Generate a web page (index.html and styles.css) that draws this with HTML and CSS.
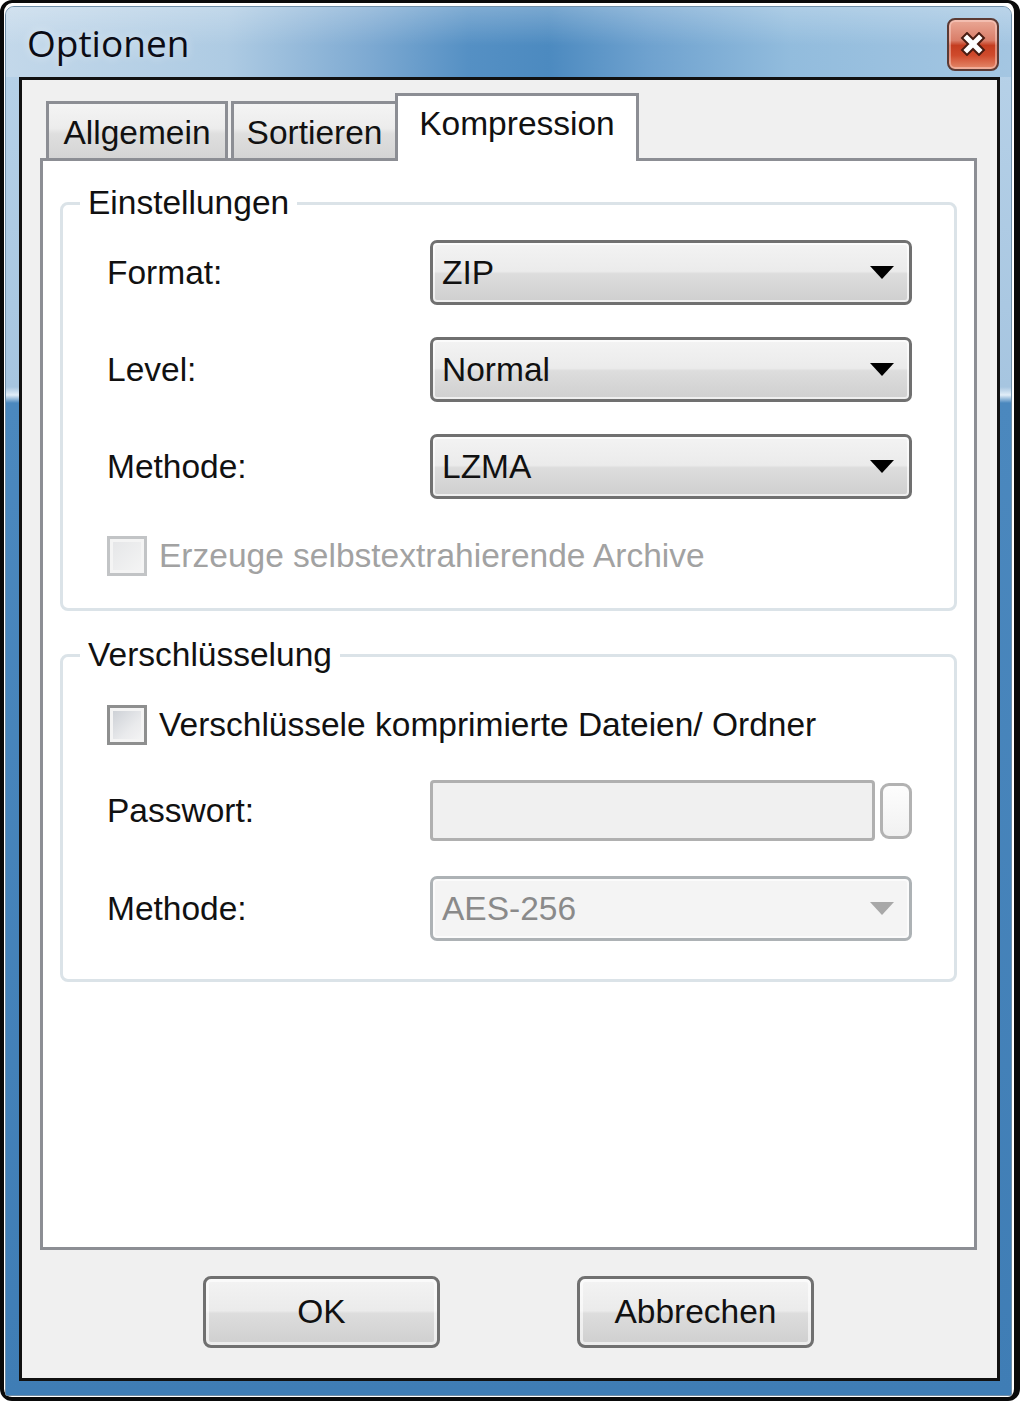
FILE: index.html
```html
<!DOCTYPE html>
<html>
<head>
  <meta charset="utf-8">
  <link rel="stylesheet" href="styles.css">
</head>
<body>
  <div class="screen">
    <div class="window">
      <div class="titlebar">
        <span class="title">Optionen</span>
        <button class="close">
          <svg width="26" height="24" viewBox="0 0 26 24">
            <path d="M7 6 L19 18 M19 6 L7 18" stroke="#4a1c12" stroke-width="9" stroke-linecap="square" fill="none"/>
            <path d="M7 6 L19 18 M19 6 L7 18" stroke="#ffffff" stroke-width="5" stroke-linecap="square" fill="none"/>
          </svg>
        </button>
      </div>
      <div class="frame">
        <div class="client">
          <div class="tabs">
            <div class="tab-strip">
              <div class="tab tab-allgemein">Allgemein</div>
              <div class="tab tab-sortieren">Sortieren</div>
              <div class="tab tab-active">Kompression</div>
            </div>
            <div class="tab-panel">
              <fieldset class="group">
                <legend>Einstellungen</legend>
                <div class="group-body">
                  <label>Format:</label>
                  <div class="combo">ZIP<span class="arrow"></span></div>
                  <label>Level:</label>
                  <div class="combo">Normal<span class="arrow"></span></div>
                  <label>Methode:</label>
                  <div class="combo">LZMA<span class="arrow"></span></div>
                  <div class="check-row disabled">
                    <span class="checkbox"></span>
                    Erzeuge selbstextrahierende Archive
                  </div>
                </div>
              </fieldset>

              <fieldset class="group group-crypt">
                <legend>Verschlüsselung</legend>
                <div class="group-body">
                  <div class="check-row">
                    <span class="checkbox"></span>
                    Verschlüssele komprimierte Dateien/ Ordner
                  </div>
                  <label>Passwort:</label>
                  <div class="password">
                    <div class="textbox"></div>
                    <div class="pw-button"></div>
                  </div>
                  <label>Methode:</label>
                  <div class="combo combo-disabled">AES-256<span class="arrow"></span></div>
                </div>
              </fieldset>
            </div>
          </div>
          <div class="buttons">
            <button class="btn">OK</button>
            <button class="btn">Abbrechen</button>
          </div>
        </div>
      </div>
    </div>
  </div>
</body>
</html>
```

FILE: styles.css
```css
html, body {
  margin: 0;
  background: #fff;
}

body {
  font-family: "Liberation Sans", Arial, sans-serif;
  font-size: 33.5px;
  color: #111;
}

.screen {
  box-sizing: border-box;
  width: 1020px;
  height: 1401px;
  border: solid #0a0a0a;
  border-width: 3px 6px 4px 4px;
  border-radius: 12px;
  padding: 3px 2px 1px 1px;
  background: #fff;
}

.window {
  box-sizing: border-box;
  height: 100%;
  display: flex;
  flex-direction: column;
  border: 1px solid #6f8ea8;
  border-radius: 9px 9px 2px 2px;
  background: linear-gradient(to bottom, #b9d3e9 0, #a6c5e0 380px, #e2eef8 388px, #4b88be 396px, #3f7db5 100%);
}

/* title bar */
.titlebar {
  height: 70px;
  display: flex;
  align-items: center;
  justify-content: space-between;
  padding: 0 12px 0 21px;
  border-radius: 8px 8px 0 0;
  background:
    linear-gradient(to bottom, rgba(255, 255, 255, 0.25), rgba(255, 255, 255, 0) 55%),
    linear-gradient(to right, #c3d8ea 0%, #aecbe3 22%, #7eaad2 36%, #5590c4 46%, #4c8ac0 54%, #6fa2cf 64%, #92bcdd 78%, #a4c6e2 100%);
}

.title {
  font-family: "Open Sans", "Noto Sans", sans-serif;
  font-size: 37px;
  color: #0b0b14;
  text-shadow: 0 0 10px rgba(255, 255, 255, 0.55);
}

.close {
  width: 52px;
  height: 53px;
  margin-top: 4px;
  padding: 0;
  display: flex;
  align-items: center;
  justify-content: center;
  border: 2px solid #5b3a34;
  border-radius: 8px;
  background: linear-gradient(to bottom, #eaa896 0%, #d97d68 42%, #c43d20 52%, #cf4a2c 72%, #e58b6c 100%);
  box-shadow: inset 0 0 0 2px rgba(255, 220, 210, 0.45);
}

/* window frame around client area */
.frame {
  flex: 1;
  display: flex;
  padding: 0 11px 14px 13px;
}

.client {
  flex: 1;
  display: flex;
  flex-direction: column;
  border: 3px solid #111;
  background: #f0f0f0;
  padding: 13px 20px 30px 18px;
}

/* tab control */
.tabs {
  flex: 1;
  display: flex;
  flex-direction: column;
}

.tab-strip {
  height: 65px;
  display: flex;
  align-items: flex-end;
  padding-left: 6px;
}

.tab {
  box-sizing: border-box;
  height: 57px;
  display: flex;
  align-items: center;
  justify-content: center;
  padding-top: 4px;
  border: 3px solid #8c8e94;
  border-bottom: none;
  background: linear-gradient(to bottom, #f4f4f4 0%, #ececec 45%, #dfdfdf 55%, #d4d4d4 100%);
}

.tab-allgemein {
  width: 182px;
  margin-right: 3px;
}

.tab-sortieren {
  width: 167px;
}

.tab-active {
  width: 244px;
  height: 68px;
  margin-bottom: -3px;
  margin-left: -3px;
  padding-top: 0;
  padding-bottom: 10px;
  background: #fff;
  position: relative;
  z-index: 1;
}

.tab-panel {
  flex: 1;
  border: 3px solid #8c8e94;
  background: #fff;
  padding: 22px 17px 0;
}

/* group boxes */
.group {
  margin: 0;
  padding: 0;
  border: 3px solid #dbe3e8;
  border-radius: 8px;
}

.group legend {
  margin-left: 17px;
  padding: 0 8px;
  line-height: 40px;
}

.group-crypt {
  margin-top: 24px;
}

.group-body {
  display: grid;
  grid-template-columns: 323px 1fr;
  row-gap: 32px;
  align-items: center;
  padding: 17px 42px 32px 44px;
}

.group-crypt .group-body {
  row-gap: 35px;
  padding: 30px 42px 38px 44px;
}

.combo {
  box-sizing: border-box;
  height: 65px;
  display: flex;
  align-items: center;
  justify-content: space-between;
  padding: 0 15px 0 9px;
  border: 3px solid #707070;
  border-radius: 7px;
  background: linear-gradient(to bottom, #f3f3f3 0%, #ebebeb 48%, #dddddd 52%, #cfcfcf 100%);
  box-shadow: inset 0 0 0 2px rgba(255, 255, 255, 0.65);
}

.arrow {
  width: 0;
  height: 0;
  border-left: 12px solid transparent;
  border-right: 12px solid transparent;
  border-top: 13px solid #000;
}

.combo-disabled {
  border-color: #adb2b5;
  background: #f4f4f4;
  color: #8a8a8a;
}

.combo-disabled .arrow {
  border-top-color: #a8a8a8;
}

.check-row {
  grid-column: 1 / -1;
  display: flex;
  align-items: center;
  gap: 12px;
}

.check-row.disabled {
  margin-top: 5px;
  color: #a2a2a2;
}

.checkbox {
  box-sizing: border-box;
  width: 40px;
  height: 40px;
  border: 3px solid #8e8f8f;
  background: linear-gradient(135deg, #c9cdd3 0%, #e9eaec 60%, #f6f6f6 100%);
  box-shadow: inset 0 0 0 3px #f4f4f4;
}

.disabled .checkbox {
  border-color: #c2c4c6;
  background: linear-gradient(135deg, #e4e5e7 0%, #f5f5f5 100%);
}

.password {
  display: flex;
  align-items: center;
  gap: 5px;
}

.textbox {
  box-sizing: border-box;
  flex: 1;
  height: 61px;
  border: 3px solid #b0b0b0;
  border-radius: 4px;
  background: #f0f0f0;
}

.pw-button {
  box-sizing: border-box;
  width: 32px;
  height: 56px;
  border: 3px solid #b2b2b2;
  border-radius: 9px;
  background: linear-gradient(to bottom, #fdfdfd, #f1f1f1);
}

/* dialog buttons */
.buttons {
  display: flex;
  justify-content: center;
  gap: 137px;
  margin-top: 26px;
}

.btn {
  width: 237px;
  height: 72px;
  padding: 0;
  font-family: "Liberation Sans", Arial, sans-serif;
  font-size: 33.5px;
  color: #111;
  border: 3px solid #707070;
  border-radius: 8px;
  background: linear-gradient(to bottom, #f3f3f3 0%, #ebebeb 48%, #dddddd 52%, #cfcfcf 100%);
  box-shadow: inset 0 0 0 3px rgba(255, 255, 255, 0.6);
}
```
